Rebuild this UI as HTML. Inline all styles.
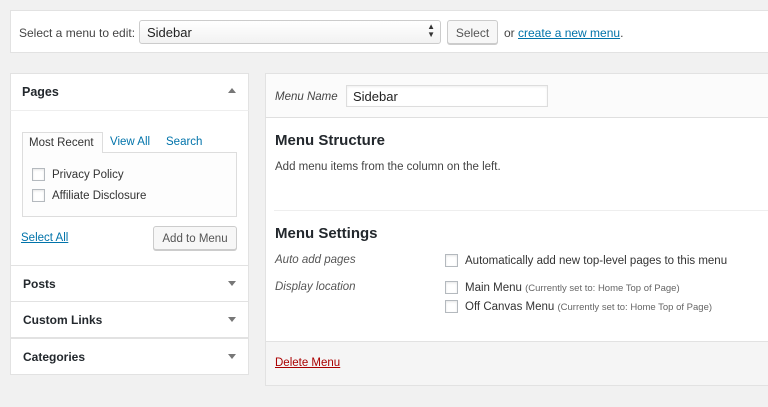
<!DOCTYPE html><html><head><style>
*{box-sizing:border-box;margin:0;padding:0}
body{width:768px;height:407px;background:#f1f1f1;font-family:"Liberation Sans",sans-serif;font-size:11.5px;color:#444;position:relative;overflow:hidden}
.a{position:absolute}
.box{background:#fff;border:1px solid #e2e2e2}
a{color:#0073aa}
.cb{position:absolute;width:13px;height:13px;border:1px solid #b4b9be;background:#fff;box-shadow:inset 0 1px 2px rgba(0,0,0,.1)}
.btn{position:absolute;background:#f7f7f7;border:1px solid #ccc;border-radius:3px;box-shadow:0 1px 0 #ccc;color:#555;font-size:11.5px;text-align:center}
.row{position:absolute;left:10px;width:239px;border:1px solid #e2e2e2;background:#fff;height:37px;font-weight:bold;font-size:12px;color:#23282d;padding:11px 12px}
.tri{position:absolute;right:12px;top:15px;width:0;height:0;border-left:4px solid transparent;border-right:4px solid transparent;border-top:5px solid #777}
</style></head><body>
<div class="a box" style="left:10px;top:10px;width:770px;height:43px"></div>
<div class="a" style="left:19px;top:26px;font-size:12px">Select a menu to edit:</div>
<div class="a" style="left:139px;top:20px;width:302px;height:24px;border:1px solid #ccc;border-radius:3px;background:linear-gradient(#fff,#f2f2f2);font-size:13px;color:#222;padding:4px 7px">Sidebar<span style="position:absolute;right:5px;top:2px;font-size:8px;line-height:8px;color:#333">▲<br>▼</span></div>
<div class="btn" style="left:447px;top:20px;width:51px;height:24px;padding-top:5px;font-size:12px">Select</div>
<div class="a" style="left:504px;top:26px;font-size:12px">or <a style="text-decoration:underline">create a new menu</a>.</div>

<div class="a box" style="left:10px;top:73px;width:239px;height:193px"></div>
<div class="a" style="left:10px;top:73px;width:239px;height:38px;border:1px solid #e2e2e2;border-bottom-color:#eee"></div>
<div class="a" style="left:22px;top:85px;font-weight:bold;font-size:12.5px;color:#23282d">Pages</div>
<div class="a" style="left:228px;top:88px;width:0;height:0;border-left:4px solid transparent;border-right:4px solid transparent;border-bottom:5px solid #777"></div>
<div class="a" style="left:22px;top:152px;width:215px;height:65px;border:1px solid #ddd;background:#fdfdfd"></div>
<div class="a" style="left:22px;top:132px;width:81px;height:21px;border:1px solid #ddd;border-bottom:none;background:#fdfdfd;padding:4px 6px;color:#333">Most Recent</div>
<div class="a" style="left:110px;top:136px;color:#0073aa">View All</div>
<div class="a" style="left:166px;top:136px;color:#0073aa">Search</div>
<div class="cb" style="left:32px;top:168px"></div><div class="a" style="left:52px;top:169px;color:#333">Privacy Policy</div>
<div class="cb" style="left:32px;top:189px"></div><div class="a" style="left:52px;top:190px;color:#333">Affiliate Disclosure</div>
<div class="a" style="left:21px;top:232px"><a style="text-decoration:underline">Select All</a></div>
<div class="btn" style="left:153px;top:226px;width:84px;height:24px;padding-top:6px">Add to Menu</div>
<div class="row" style="top:265px">Posts<div class="tri"></div></div>
<div class="row" style="top:301px">Custom Links<div class="tri"></div></div>
<div class="row" style="top:338px">Categories<div class="tri"></div></div>

<div class="a box" style="left:265px;top:73px;width:520px;height:313px"></div>
<div class="a" style="left:265px;top:73px;width:520px;height:45px;background:#fbfbfb;border:1px solid #e2e2e2;border-bottom-color:#dfdfdf"></div>
<div class="a" style="left:275px;top:91px;font-style:italic;color:#444">Menu Name</div>
<div class="a" style="left:346px;top:85px;width:202px;height:22px;border:1px solid #ddd;background:#fff;font-size:13px;color:#222;padding:3px 6px;box-shadow:inset 0 1px 2px rgba(0,0,0,.07)">Sidebar</div>
<div class="a" style="left:275px;top:132px;font-weight:bold;font-size:15px;color:#23282d">Menu Structure</div>
<div class="a" style="left:275px;top:161px;color:#444">Add menu items from the column on the left.</div>
<div class="a" style="left:274px;top:210px;width:500px;border-top:1px solid #eee"></div>
<div class="a" style="left:275px;top:225px;font-weight:bold;font-size:15px;color:#23282d">Menu Settings</div>
<div class="a" style="left:275px;top:254px;font-style:italic;color:#555">Auto add pages</div>
<div class="a" style="left:275px;top:281px;font-style:italic;color:#555">Display location</div>
<div class="cb" style="left:445px;top:254px"></div><div class="a" style="left:465px;top:255px;color:#333">Automatically add new top-level pages to this menu</div>
<div class="cb" style="left:445px;top:281px"></div><div class="a" style="left:465px;top:282px;color:#333">Main Menu <span style="font-size:9.5px;color:#666">(Currently set to: Home Top of Page)</span></div>
<div class="cb" style="left:445px;top:300px"></div><div class="a" style="left:465px;top:301px;color:#333">Off Canvas Menu <span style="font-size:9.5px;color:#666">(Currently set to: Home Top of Page)</span></div>
<div class="a" style="left:265px;top:341px;width:520px;height:45px;background:#f5f5f5;border:1px solid #e2e2e2"></div>
<div class="a" style="left:275px;top:357px;color:#a00;text-decoration:underline">Delete Menu</div>
</body></html>
